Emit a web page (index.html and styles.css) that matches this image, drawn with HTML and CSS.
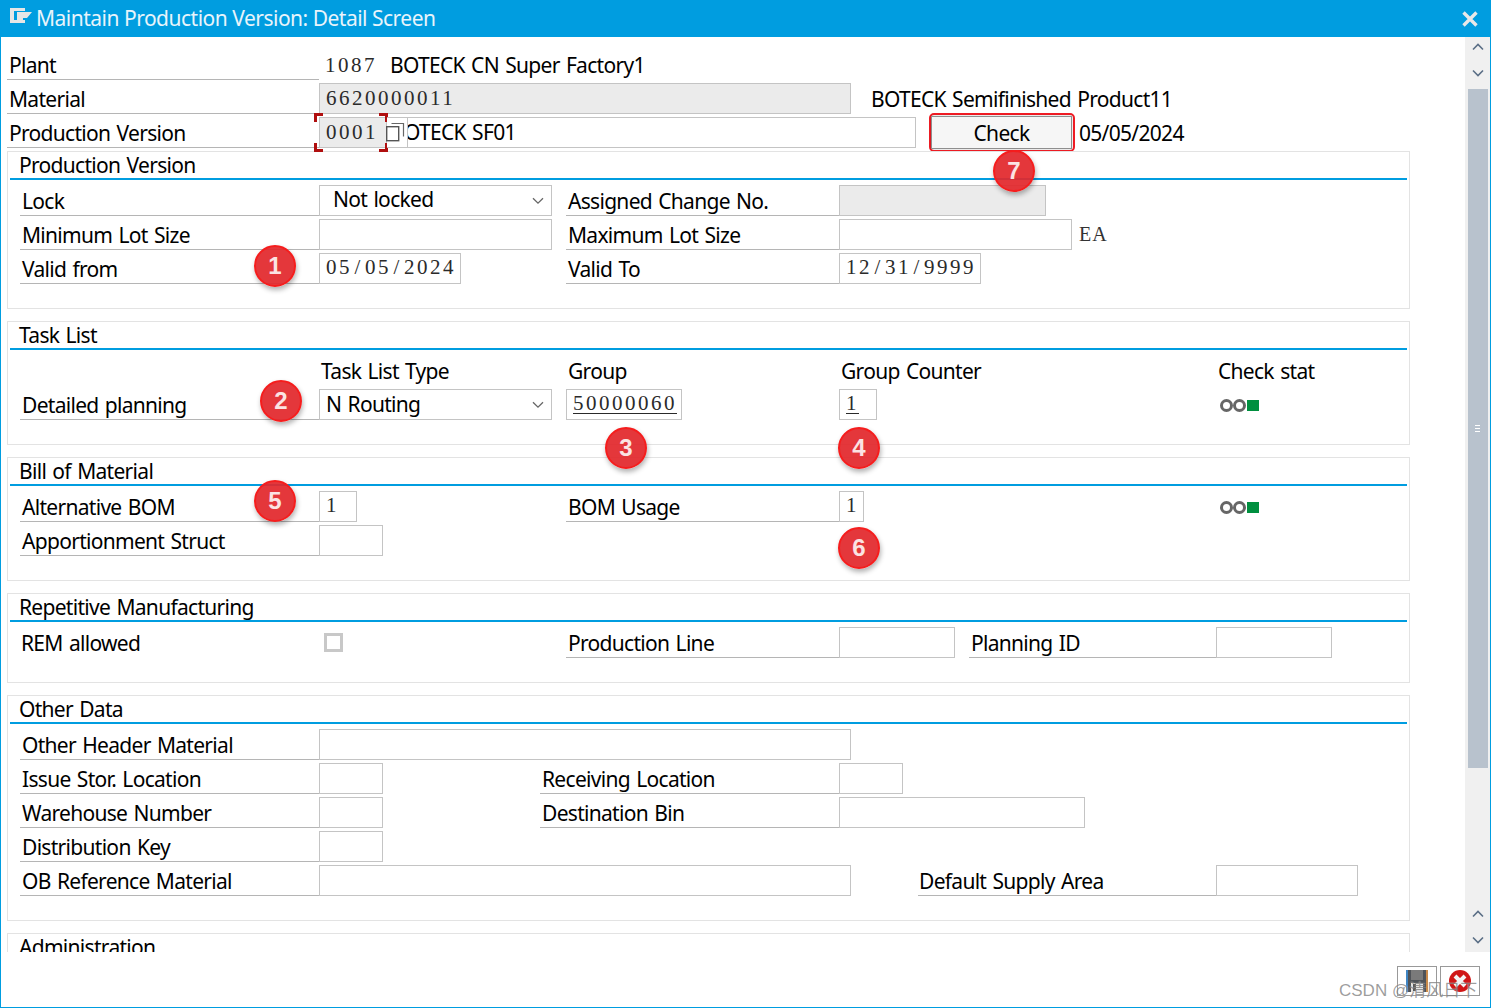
FILE: index.html
```html
<!DOCTYPE html>
<html lang="en">
<head>
<meta charset="utf-8">
<title>Maintain Production Version: Detail Screen</title>
<link rel="stylesheet" href="styles.css">
</head>
<body>
<div class="window">
  <header class="titlebar">
    <svg class="title-icon" width="22" height="16" viewBox="0 0 22 16"><path fill="#e6e6e6" d="M0 0H15V3H4V12H15V15H0Z"/><path fill="#e6e6e6" d="M7 4H22L17 10H13V12H7Z"/></svg>
    <span class="title-text">Maintain Production Version: Detail Screen</span>
    <svg class="title-close" width="16" height="16" viewBox="0 0 16 16"><path stroke="#e8e8e8" stroke-width="3.4" d="M1.5 1.5l13 13M14.5 1.5l-13 13"/></svg>
  </header>
  <div class="body">
    <div class="viewport">
      <main class="content">
        <div class="head-rows">
          <div class="row">
            <div class="lbl lbl-top">Plant</div>
            <div class="mono value-plant">1087</div>
            <div class="text plant-name">BOTECK CN Super Factory1</div>
          </div>
          <div class="row">
            <div class="lbl lbl-top">Material</div>
            <div class="fld disabled w532 mono">6620000011</div>
            <div class="text mat-name">BOTECK Semifinished Product11</div>
          </div>
          <div class="row">
            <div class="lbl lbl-top">Production Version</div>
            <div class="version-wrap">
              <div class="fld disabled w68 mono version-fld">0001</div>
              <span class="corner c1"></span><span class="corner c2"></span><span class="corner c3"></span><span class="corner c4"></span>
            </div>
            <div class="fld w529 text desc-fld">
              BOTECK SF01
              <span class="copy-box"><svg width="20" height="20" viewBox="0 0 20 20"><path fill="none" stroke="#666" stroke-width="1.2" d="M5.5 2.5h12v13"/><rect x="0.7" y="5.7" width="12" height="14" fill="#fff" stroke="#555" stroke-width="1.4"/></svg></span>
            </div>
            <div class="check-wrap"><button class="btn-check">Check</button></div>
            <div class="text check-date">05/05/2024</div>
          </div>
        </div>

        <section class="group g-prod">
          <h2 class="group-title">Production Version</h2>
          <div class="row row-first">
            <div class="lbl lbl-a">Lock</div>
            <div class="fld w233 text select">Not locked<svg class="chev" width="12" height="8" viewBox="0 0 12 8"><path fill="none" stroke="#666" stroke-width="1.3" d="M1 1.2l5 5 5-5"/></svg></div>
            <div class="lbl lbl-b">Assigned Change No.</div>
            <div class="fld disabled w207"></div>
          </div>
          <div class="row">
            <div class="lbl lbl-a">Minimum Lot Size</div>
            <div class="fld w233"></div>
            <div class="lbl lbl-b">Maximum Lot Size</div>
            <div class="fld w233"></div>
            <div class="unit">EA</div>
          </div>
          <div class="row">
            <div class="lbl lbl-a">Valid from</div>
            <div class="fld w142 mono">05<span class="slash">/</span>05<span class="slash">/</span>2024</div>
            <div class="lbl lbl-b lbl-b-valid">Valid To</div>
            <div class="fld w142 mono">12<span class="slash">/</span>31<span class="slash">/</span>9999</div>
          </div>
        </section>

        <section class="group g-task">
          <h2 class="group-title">Task List</h2>
          <div class="col-heads">
            <div class="col-h h1">Task List Type</div>
            <div class="col-h h2">Group</div>
            <div class="col-h h3">Group Counter</div>
            <div class="col-h h4">Check stat</div>
          </div>
          <div class="row">
            <div class="lbl lbl-a">Detailed planning</div>
            <div class="fld w233 text select select-routing">N Routing<svg class="chev" width="12" height="8" viewBox="0 0 12 8"><path fill="none" stroke="#666" stroke-width="1.3" d="M1 1.2l5 5 5-5"/></svg></div>
            <div class="fld w116 mono link-fld task-group"><u>50000060</u></div>
            <div class="fld w38 mono link-fld task-counter"><u>1</u></div>
            <div class="status status-task"><i class="ring"></i><i class="ring"></i><i class="sq"></i></div>
          </div>
        </section>

        <section class="group g-bom">
          <h2 class="group-title">Bill of Material</h2>
          <div class="row row-first">
            <div class="lbl lbl-a">Alternative BOM</div>
            <div class="fld w38 mono">1</div>
            <div class="lbl lbl-bom">BOM Usage</div>
            <div class="fld w25 mono">1</div>
            <div class="status status-bom"><i class="ring"></i><i class="ring"></i><i class="sq"></i></div>
          </div>
          <div class="row">
            <div class="lbl lbl-a">Apportionment Struct</div>
            <div class="fld w64"></div>
          </div>
        </section>

        <section class="group g-rem">
          <h2 class="group-title">Repetitive Manufacturing</h2>
          <div class="row row-first">
            <div class="plain-lbl">REM allowed</div>
            <div class="checkbox"></div>
            <div class="lbl lbl-prod">Production Line</div>
            <div class="fld w116"></div>
            <div class="lbl lbl-plan">Planning ID</div>
            <div class="fld w116"></div>
          </div>
        </section>

        <section class="group g-other">
          <h2 class="group-title">Other Data</h2>
          <div class="row row-first">
            <div class="lbl lbl-a">Other Header Material</div>
            <div class="fld w532"></div>
          </div>
          <div class="row">
            <div class="lbl lbl-a">Issue Stor. Location</div>
            <div class="fld w64"></div>
            <div class="lbl lbl-c">Receiving Location</div>
            <div class="fld w64"></div>
          </div>
          <div class="row">
            <div class="lbl lbl-a">Warehouse Number</div>
            <div class="fld w64"></div>
            <div class="lbl lbl-c">Destination Bin</div>
            <div class="fld w246"></div>
          </div>
          <div class="row">
            <div class="lbl lbl-a">Distribution Key</div>
            <div class="fld w64"></div>
          </div>
          <div class="row">
            <div class="lbl lbl-a">OB Reference Material</div>
            <div class="fld w532"></div>
            <div class="lbl lbl-d">Default Supply Area</div>
            <div class="fld w142"></div>
          </div>
        </section>

        <section class="group g-admin">
          <h2 class="group-title">Administration</h2>
        </section>
      </main>

      <aside class="scrollbar">
        <div class="arrows">
          <svg width="12" height="8" viewBox="0 0 12 8"><path fill="none" stroke="#5b6f86" stroke-width="1.6" d="M1 6.5l5-5 5 5"/></svg>
          <svg width="12" height="8" viewBox="0 0 12 8"><path fill="none" stroke="#5b6f86" stroke-width="1.6" d="M1 1.5l5 5 5-5"/></svg>
        </div>
        <div class="thumb"><span class="grip"></span></div>
        <div class="arrows arrows-bottom">
          <svg width="12" height="8" viewBox="0 0 12 8"><path fill="none" stroke="#5b6f86" stroke-width="1.6" d="M1 6.5l5-5 5 5"/></svg>
          <svg width="12" height="8" viewBox="0 0 12 8"><path fill="none" stroke="#5b6f86" stroke-width="1.6" d="M1 1.5l5 5 5-5"/></svg>
        </div>
      </aside>
    </div>
    <footer class="footer">
      <button class="tool"><svg width="24" height="24" viewBox="0 0 24 24"><rect x="1" y="1" width="22" height="22" fill="#4f5358"/><rect x="1" y="1" width="2" height="22" fill="#3f86c4"/><rect x="21" y="1" width="2" height="22" fill="#c98a4a"/><rect x="6" y="1" width="12" height="10" fill="#7a7a7a"/><rect x="6" y="14" width="12" height="9" fill="#e3e3e3"/><rect x="8" y="15" width="3" height="7" fill="#555"/></svg></button>
      <button class="tool"><svg width="24" height="24" viewBox="0 0 24 24"><circle cx="12" cy="12" r="11" fill="#d01616"/><path stroke="#f3f3f3" stroke-width="4" d="M7 7l10 10M17 7L7 17"/></svg></button>
    </footer>
  </div>

  <span class="badge b1">1</span>
  <span class="badge b2">2</span>
  <span class="badge b3">3</span>
  <span class="badge b4">4</span>
  <span class="badge b5">5</span>
  <span class="badge b6">6</span>
  <span class="badge b7">7</span>
  <span class="watermark">CSDN @清风日下</span>
</div>
</body>
</html>
```
FILE: styles.css
```css
* { box-sizing: border-box; }
html, body { margin: 0; padding: 0; background: #fff; }
body { font-family: "Noto Sans", "Noto Sans CJK SC", sans-serif; color: #000; letter-spacing: -0.7px; word-spacing: 1.5px; }

.window { position: relative; width: 1491px; height: 1008px; display: flex; flex-direction: column; border-left: 1px solid #009de0; border-right: 1px solid #009de0; border-bottom: 1px solid #009de0; overflow: hidden; }

.titlebar { height: 37px; flex: none; margin: 0 -1px; background: #009de0; display: flex; align-items: center; color: #e8f4fb; padding: 0 13px 0 10px; }
.title-icon { flex: none; margin-right: 4px; align-self: flex-start; margin-top: 8px; }
.title-text { font-size: 21px; flex: 1; white-space: nowrap; line-height: 34px; height: 36px; letter-spacing: -0.5px; word-spacing: 0; }
.title-close { flex: none; }

.body { flex: 1; display: flex; flex-direction: column; min-height: 0; }
.viewport { height: 915px; flex: none; display: flex; overflow: hidden; }
.content { width: 1464px; flex: none; padding: 9px 0 0 6px; overflow: hidden; }

.head-rows { margin-bottom: 3px; }
.row { display: flex; height: 34px; align-items: flex-end; }
.lbl { height: 34px; line-height: 38px; font-size: 21px; border-bottom: 1px solid #b5b5b5; white-space: nowrap; flex: none; padding-left: 2px; }
.lbl-top { width: 312px; }
.text { font-size: 21px; white-space: nowrap; }
.mono { font-family: "Liberation Serif", serif; font-size: 21px; letter-spacing: 2.5px; word-spacing: 0; color: #2a2a2a; white-space: nowrap; }
.slash { display: inline-block; width: 13px; margin: 0 1px 0 -1px; letter-spacing: 0; text-align: center; }

.value-plant { width: 71px; height: 34px; line-height: 38px; padding-left: 6px; }
.plant-name { height: 34px; line-height: 38px; }
.mat-name { height: 34px; line-height: 38px; margin-left: 20px; }

.fld { height: 31px; flex: none; background: #fff; border: 1px solid #c4c4c4; line-height: 27px; padding-left: 6px; overflow: hidden; }
.disabled { background: #ebebeb; line-height: 29px; }
.w25 { width: 25px; } .w38 { width: 38px; } .w64 { width: 64px; } .w68 { width: 68px; } .w116 { width: 116px; }
.w142 { width: 142px; } .w207 { width: 207px; } .w233 { width: 233px; } .w246 { width: 246px; } .w529 { width: 529px; } .w532 { width: 532px; }

.version-wrap { position: relative; flex: none; height: 31px; width: 68px; z-index: 1; }
.corner { position: absolute; width: 9px; height: 9px; border: 0 solid #b00f0f; }
.c1 { left: -5px; top: -4px; border-width: 3px 0 0 3px; }
.c2 { right: -1px; top: -4px; border-width: 3px 3px 0 0; }
.c3 { left: -5px; bottom: -4px; border-width: 0 0 3px 3px; }
.c4 { right: -1px; bottom: -4px; border-width: 0 3px 3px 0; }
.desc-fld { position: relative; z-index: 2; background: transparent; padding-left: 3px; line-height: 29px; overflow: visible; }
.copy-box { position: absolute; left: -1px; top: -1px; width: 21px; height: 31px; background: #fff; border-right: 1px solid #c4c4c4; border-top: 1px solid #c4c4c4; border-bottom: 1px solid #c4c4c4; }
.copy-box svg { position: absolute; left: -1px; top: 3px; overflow: visible; }

.check-wrap { flex: none; margin-left: 13px; width: 146px; height: 39px; margin-bottom: -4px; border: 2px solid #f01c24; border-radius: 5px; padding: 1px 1px 1px 0; }
.btn-check { display: block; width: 141px; height: 33px; border: 1px solid #8f8f8f; background: #f6f6f6; font: 21px "Noto Sans", sans-serif; letter-spacing: -0.7px; color: #000; padding: 0; box-shadow: 0 0 2px rgba(0,0,0,.25); }
.check-date { height: 34px; line-height: 38px; margin-left: 4px; }

.group { position: relative; width: 1403px; margin-top: 12px; border: 1px solid #e3e3e3; padding: 0 2px; overflow: hidden; }
.head-rows + .group { margin-top: 0; }
.group-title { margin: 0; height: 28px; font-weight: 400; font-size: 21px; line-height: 26px; padding-left: 9px; white-space: nowrap; box-shadow: inset 0 -2px 0 #009de0; }
.g-prod { height: 158px; }
.g-task { height: 124px; }
.g-bom { height: 124px; }
.g-rem { height: 90px; }
.g-other { height: 226px; }
.g-admin { height: 60px; }

.row-first { margin-top: 2px; }
.group .row { margin-left: 10px; }
.lbl-a { width: 299px; }
.lbl-b { width: 273px; margin-left: 14px; }
.lbl-bom { width: 273px; margin-left: 209px; }
.lbl-prod { width: 273px; margin-left: 223px; }
.lbl-plan { width: 247px; margin-left: 14px; }
.lbl-c { width: 299px; margin-left: 157px; }
.lbl-d { width: 298px; margin-left: 67px; padding-left: 1px; }
.lbl-b-valid { margin-left: 105px; }
.unit { height: 34px; line-height: 36px; margin-left: 7px; font-family: "Liberation Serif", serif; font-size: 20px; letter-spacing: 1px; color: #333; }

.select { position: relative; padding-left: 13px; line-height: 27px; }
.select-routing { padding-left: 6px; line-height: 29px; }
.select .chev { position: absolute; right: 7px; top: 11px; }

.col-heads { height: 36px; margin-left: 10px; position: relative; }
.col-h { position: absolute; top: 7px; font-size: 21px; line-height: 28px; white-space: nowrap; }
.h1 { left: 301px; } .h2 { left: 548px; } .h3 { left: 821px; } .h4 { left: 1198px; }
.link-fld u { text-decoration-thickness: 1px; text-underline-offset: 3px; }
.task-group { margin-left: 14px; }
.task-counter { margin-left: 157px; }
.status { display: flex; align-items: center; height: 31px; flex: none; padding-top: 2px; }
.status-task { margin-left: 343px; }
.status-bom { margin-left: 356px; }
.ring { width: 13px; height: 13px; border: 3px solid #666; border-radius: 50%; }
.sq { width: 12px; height: 11px; margin-left: 1px; background: #008f3f; }

.plain-lbl { width: 304px; height: 34px; line-height: 38px; font-size: 21px; flex: none; padding-left: 1px; }
.checkbox { width: 19px; height: 19px; border: 3px solid #c8c8c8; margin-bottom: 6px; flex: none; }

.scrollbar { width: 25px; flex: none; background: #f0f0f0; display: flex; flex-direction: column; align-items: stretch; position: relative; }
.arrows { height: 52px; flex: none; display: flex; flex-direction: column; align-items: center; gap: 18px; padding-top: 6px; }
.thumb { height: 679px; margin-left: 3px; width: 20px; background: #b8c2cd; position: relative; flex: none; }
.grip { position: absolute; left: 7px; top: 336px; width: 5px; height: 7px; background: repeating-linear-gradient(#fff 0 1.5px, transparent 1.5px 3px); }
.arrows-bottom { margin-top: auto; padding-top: 0; padding-bottom: 8px; height: auto; }

.footer { flex: 1; display: flex; justify-content: flex-end; gap: 3px; padding: 14px 10px 0 0; }
.tool { width: 40px; height: 30px; padding: 0; background: #fff; border: 1px solid #999; display: flex; align-items: center; justify-content: center; }

.badge { position: absolute; width: 42px; height: 42px; border-radius: 50%; background: rgba(226, 40, 44, .93); border: 2px solid #f51d1d; box-shadow: 1px 3px 5px rgba(0,0,0,.3); color: #fbe3e3; font: 700 24px/37px "Liberation Sans", sans-serif; letter-spacing: 0; text-align: center; }
.b1 { left: 253px; top: 245px; }
.b2 { left: 259px; top: 380px; }
.b3 { left: 604px; top: 427px; }
.b4 { left: 837px; top: 427px; }
.b5 { left: 253px; top: 480px; }
.b6 { left: 837px; top: 527px; }
.b7 { left: 992px; top: 150px; }

.watermark { position: absolute; left: 1338px; top: 976px; font: 17px "Liberation Sans", "Noto Sans CJK SC", sans-serif; letter-spacing: 0; word-spacing: 0; color: rgba(90,90,90,.6); white-space: nowrap; text-shadow: 0 0 1px rgba(255,255,255,.6); }
```
